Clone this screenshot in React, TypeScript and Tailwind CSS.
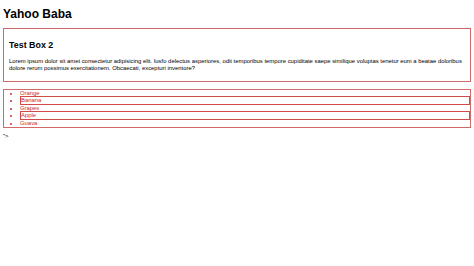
export default function App() {
  const fruits = ['Orange', 'Banana', 'Grapes', 'Apple', 'Guava'];
  return (
    <div className="min-h-screen bg-white px-[3px] text-black" style={{ fontFamily: '"Liberation Sans", Arial, sans-serif' }}>
      <h1 className="pt-[7px] pb-[7px] text-[12px] font-bold leading-[14px]">Yahoo Baba</h1>
      <div className="border border-[#d06a6a] px-[5px] pt-[11px] pb-[9px]">
        <h2 className="text-[8.9px] font-bold leading-[10px]">Test Box 2</h2>
        <p className="mt-[8px] text-[5.9px] leading-[6.8px]">
          Lorem ipsum dolor sit amet consectetur adipisicing elit. Iusfo delectus asperiores, odit temporibus tempore cupiditate saepe similique voluptas tenetur eum a beatae doloribus dolore rerum possimus exercitationem. Obcaecati, excepturi inventore?
        </p>
      </div>
      <ul className="mt-[7px] list-disc border border-[#d06a6a] pl-[16px] text-[5.9px] leading-[6.6px] text-[#d42a2a]">
        {fruits.map((f, i) => (
          <li key={f} className={i % 2 === 1 ? 'border border-[#d04a4a]' : ''}>
            {f}
          </li>
        ))}
      </ul>
      <div className="mt-[5px] text-[5.9px] leading-[6.8px]">"&gt;</div>
    </div>
  );
}
